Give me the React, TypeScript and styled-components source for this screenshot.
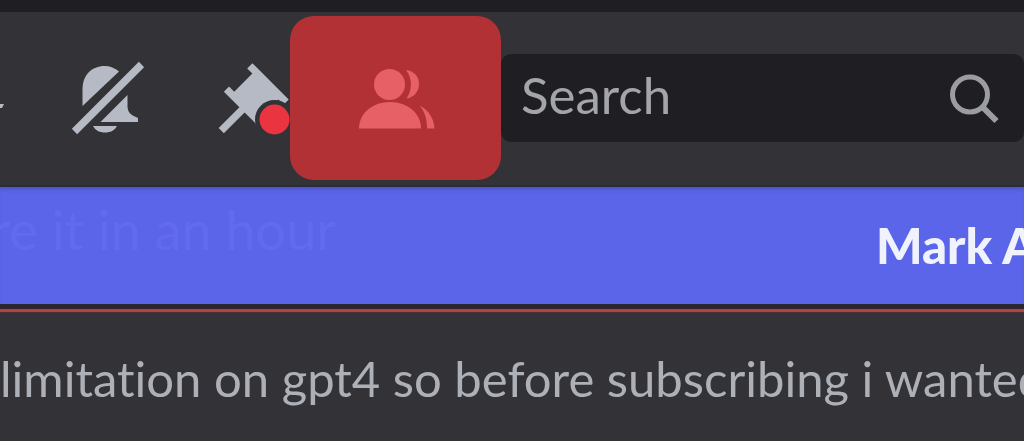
import React from 'react';
import styled, { createGlobalStyle } from 'styled-components';

const GlobalStyle = createGlobalStyle`
  * { box-sizing: border-box; }
  body {
    margin: 0;
    overflow-x: hidden;
    background: #323237;
    font-family: Lato, "Open Sans", sans-serif;
    font-variant-ligatures: none;
  }
`;

const Page = styled.main`
  width: 100%;
  min-height: 100vh;
  overflow: hidden;
  background: #323237;
`;

const TitleStrip = styled.div`
  height: 12px;
  background: #1f1e23;
`;

const Toolbar = styled.header`
  display: flex;
  align-items: center;
  height: 175px;
  padding-bottom: 1px;
  border-bottom: 2px solid #2b2c3c;
`;

const IconButton = styled.button<{ $gap?: boolean }>`
  display: block;
  flex: none;
  margin: 0 ${(p) => (p.$gap ? '56px' : '0')} 0 0;
  padding: 0;
  border: 0;
  background: none;
  color: #b5bac4;
  svg { display: block; }
`;

const MembersButton = styled.button`
  display: flex;
  flex: none;
  align-items: center;
  justify-content: center;
  width: 211px;
  height: 164px;
  padding: 0;
  border: 0;
  border-radius: 24px;
  background: #b23134;
  color: #e66065;
`;

const SearchBox = styled.label`
  display: flex;
  flex: 1;
  align-items: center;
  min-width: 0;
  height: 88px;
  padding: 0 24px 0 20px;
  border-radius: 10px;
  background: #1f1f23;
  color: #9b9da3;
`;

const SearchInput = styled.input`
  flex: 1;
  min-width: 0;
  height: 68px;
  padding: 0 0 8px;
  border: 0;
  outline: 0;
  background: transparent;
  color: #a3a5ab;
  font: 400 51px/60px Lato, "Open Sans", sans-serif;
  &::placeholder { color: #a3a5ab; opacity: 1; }
`;

const NewMessagesBar = styled.section`
  display: flex;
  align-items: center;
  justify-content: space-between;
  height: 117px;
  background: #5b65ea;
  box-shadow: inset 0 4px 4px -2px #4b53bd;
  white-space: nowrap;
`;

const FadedText = styled.span`
  display: flex;
  justify-content: flex-end;
  width: 336px;
  padding-bottom: 32px;
  overflow: hidden;
  color: #626bf0;
  font-size: 54px;
  line-height: 60px;
`;

const MarkButton = styled.button`
  width: 148px;
  padding: 0 0 2px;
  border: 0;
  overflow: hidden;
  background: none;
  color: #f0f2fe;
  font: 900 49px/60px Lato, "Open Sans", sans-serif;
  text-align: left;
  white-space: nowrap;
`;

const UnreadDivider = styled.hr`
  height: 9px;
  margin: 0;
  border: 0;
  border-top: 5px solid #2b2730;
  border-bottom: 1px solid #443438;
  background: #b54045;
`;

const Message = styled.p`
  margin: 0;
  padding: 35px 0;
  overflow: hidden;
  color: #adb0b7;
  font-size: 49px;
  line-height: 60px;
  white-space: nowrap;
`;

const ThreadsIcon = () => (
  <svg width="8" height="88" viewBox="0 54 8 88" fill="currentColor" aria-hidden="true">
    <path d="M0 104h4l-2 4H0z" />
  </svg>
);

const BellOffIcon = () => (
  <svg width="88" height="88" viewBox="64 54 88 88" fill="currentColor" aria-hidden="true">
    <path d="M82.500 106V89C82.500 75 92 66 104.500 66c5.500 0 10.500 2 14.500 5.500z" />
    <path d="M127.500 95v11c0 6 3 9 10.500 12v4h-37.500z" />
    <path d="M93 126h24c-2.500 4.500-6.500 6.500-12 6.500S95.500 130.500 93 126z" />
    <path d="M74.500 131.500 141.500 64.500" stroke="currentColor" strokeWidth="7.500" />
  </svg>
);

const PinIcon = () => (
  <svg width="82" height="88" viewBox="208 54 82 88" fill="currentColor" aria-hidden="true">
    <mask id="pin-badge-cutout">
      <rect x="208" y="54" width="82" height="88" fill="#fff" />
      <circle cx="274.500" cy="119.500" r="19.500" fill="#000" />
    </mask>
    <g mask="url(#pin-badge-cutout)">
      <path
        transform="translate(208 55.500) scale(3.667)"
        d="M22 12 12.101 2.101l-1.415 1.413 1.415 1.415-4.950 4.949-1.415-1.413L4.322 9.880l4.243 4.242-5.657 5.656 1.414 1.414 5.657-5.656 4.243 4.242 1.414-1.414-1.414-1.414L19.171 12l1.415 1.414z"
      />
    </g>
    <circle cx="274.500" cy="119.500" r="15" fill="#ea3541" />
  </svg>
);

const MembersIcon = () => (
  <svg width="88" height="88" viewBox="352 54 88 88" fill="currentColor" aria-hidden="true">
    <circle cx="389.500" cy="84.500" r="15.500" />
    <path d="M359 128.500c0-15 13-26.500 31-26.500s31 11.500 31 26.500z" />
    <path d="M406 70c8 1 13 6.500 13 14s-5 13.500-12.500 14.500c6-8.500 6-20-.5-28.500z" />
    <path d="M419.500 105.500c9.500 5 14.500 13 15 23h-7.500c0-9-2-16.500-7.500-23z" />
  </svg>
);

const SearchIcon = () => (
  <svg width="52" height="52" viewBox="948 72 52 52" fill="none" stroke="currentColor" aria-hidden="true">
    <circle cx="970" cy="94.500" r="17.500" strokeWidth="5" />
    <path d="M982.500 107 996.500 121" strokeWidth="6" />
  </svg>
);

export default function App() {
  return (
    <>
      <GlobalStyle />
      <Page>
        <TitleStrip />
        <Toolbar>
          <IconButton type="button" aria-label="Threads" $gap><ThreadsIcon /></IconButton>
          <IconButton type="button" aria-label="Notifications muted" $gap><BellOffIcon /></IconButton>
          <IconButton type="button" aria-label="Pinned messages"><PinIcon /></IconButton>
          <MembersButton type="button" aria-label="Members"><MembersIcon /></MembersButton>
          <SearchBox>
            <SearchInput type="text" placeholder="Search" aria-label="Search" />
            <SearchIcon />
          </SearchBox>
        </Toolbar>
        <NewMessagesBar>
          <FadedText>re it in an hour</FadedText>
          <MarkButton type="button">Mark A</MarkButton>
        </NewMessagesBar>
        <UnreadDivider />
        <Message>limitation on gpt4 so before subscribing i wanted</Message>
      </Page>
    </>
  );
}
